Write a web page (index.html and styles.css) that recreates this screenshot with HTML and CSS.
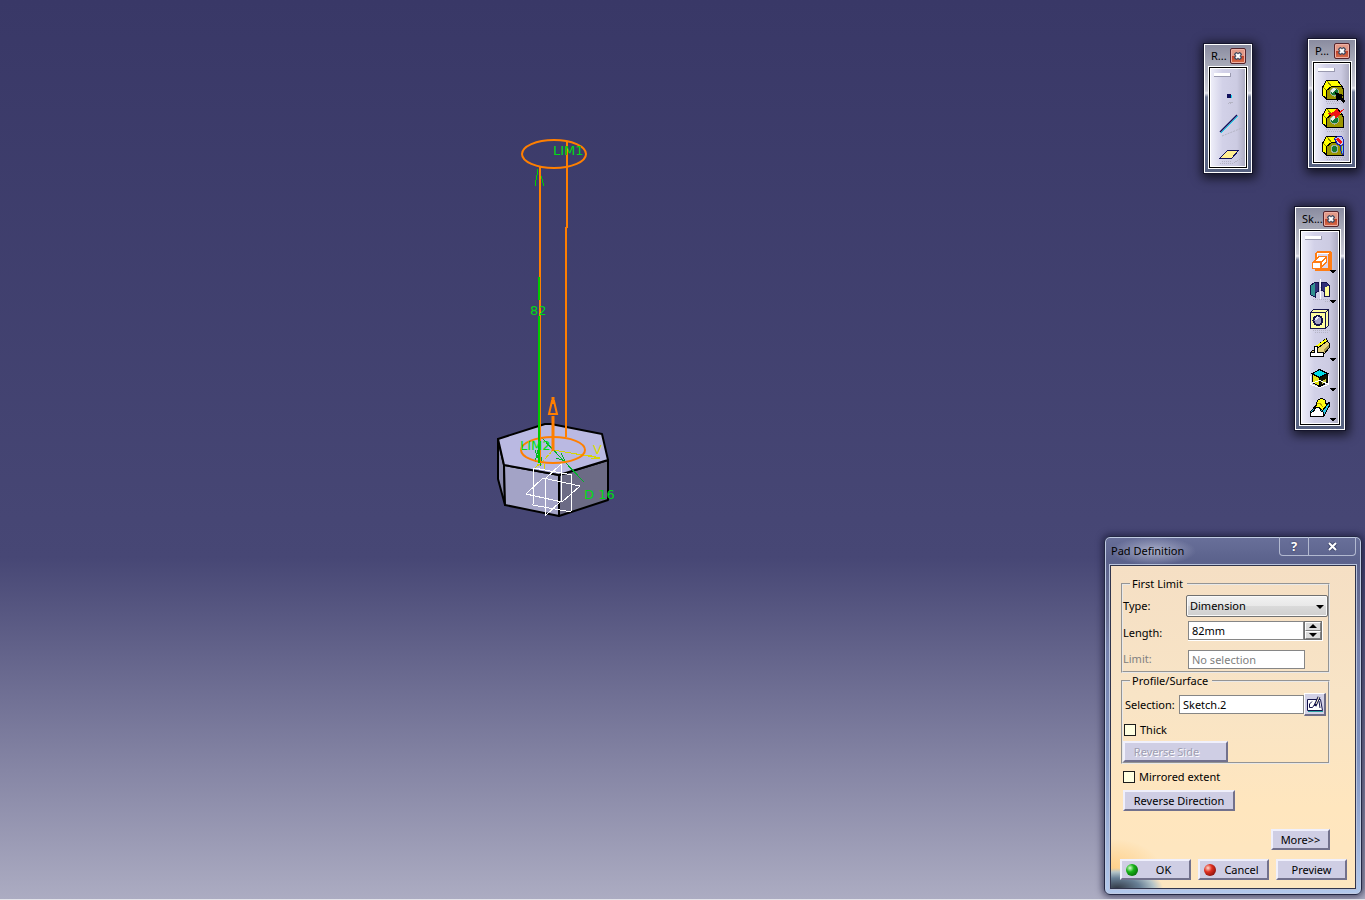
FILE: index.html
```html
<!DOCTYPE html>
<html lang="en">

<head>
    <meta charset="UTF-8">
    <meta name="viewport" content="width=device-width, initial-scale=1.0">
    <title>Part Design</title>
    <link rel="stylesheet" href="styles.css">
</head>

<body>
    <main class="workspace">
        <!-- 3D Model -->
        <svg class="model" width="140" height="400" viewBox="490 130 140 400" role="img" aria-label="Bolt model">
            <g stroke="#000" stroke-width="2" stroke-linejoin="round">
                <path fill="#8c8cae" d="M498 439L504 465L505 505L498 479Z" />
                <path fill="#a3a3c6" d="M504 465L559 475L559 516L505 505Z" />
                <path fill="#6c6b85" d="M559 475L608 460L608 500L559 516Z" />
                <path fill="#bab9e2" d="M498 439L545 424H551L602 434L608 460L559 475L504 465Z" />
            </g>
            <g fill="none" stroke="#d6d600" shape-rendering="crispEdges">
                <path d="M553 450L600 458M588 455L600 458L591 459" />
                <path stroke-dasharray="5 2" d="M553 450L544 460L534 469M537 464H544V469" />
            </g>
            <g fill="none" stroke="#fff" shape-rendering="crispEdges">
                <path d="M534 468L572 475L571 512L533 505Z" />
                <path d="M543 478L580 486L562 502L526 494Z" />
                <path d="M561 464V501L545 516V479Z" />
            </g>
            <g fill="none" stroke="#00b428" shape-rendering="crispEdges">
                <path d="M541 437L584 482M561 453L565 461L556 458" />
                <path d="M539 446L535 462M539 446L542 462M535 450L541 466" />
                <path stroke="#00d200" d="M538 169L535 186M539 169L544 186" />
            </g>
            <g fill="none" stroke="#ff7f00" stroke-width="2">
                <ellipse cx="554" cy="154" rx="32" ry="14" />
                <ellipse cx="553" cy="450" rx="32" ry="13" />
                <path d="M540 167V463M567 141V228M566 227V437" />
                <path stroke-width="3" d="M553 416V451" />
                <path d="M552 401L549 414H557L554 401Z" />
                <path stroke-width="3" d="M553 397V404" />
            </g>
            <path fill="none" stroke="#00c800" stroke-width="2" d="M539 277V300M539 316V463" />
            <path fill="none" stroke="#ff7f00" d="M540 277V463" shape-rendering="crispEdges" />
            <g class="model-label">
                <text x="553" y="155">LIM1</text>
                <text x="530" y="315">82</text>
                <text x="520" y="450">LIM2</text>
                <text x="584" y="499">D 16</text>
                <text class="axis-label" x="593" y="454">V</text>
            </g>
        </svg>

        <!-- Reference Elements Toolbar -->
        <section class="toolbar toolbar-reference">
            <div class="toolbar-title">
                <h2>R...</h2>
                <button class="close-btn" aria-label="Close"><svg width="8" height="8" viewBox="0 0 8 8"><path d="M1 1L7 7M7 1L1 7" stroke="#444c60" stroke-width="4" /><path d="M2 2L6 6M6 2L2 6" stroke="#fff" stroke-width="2" /></svg></button>
            </div>
            <div class="toolbar-body">
                <button class="tool" aria-label="Point">
                    <svg width="36" height="28" viewBox="0 0 36 28" shape-rendering="crispEdges">
                        <path fill="#0cd8f0" d="M18 13H22V16H18Z" />
                        <path fill="#10105c" d="M17 12H21V16H17Z" />
                        <path stroke="#b4b4c4" stroke-dasharray="1 1" d="M18 22L21 20M20 22L23 20" />
                    </svg>
                </button>
                <button class="tool" aria-label="Line">
                    <svg width="36" height="28" viewBox="0 0 36 28">
                        <path stroke="#b4b4c4" stroke-dasharray="2 1" d="M12 26L32 18" />
                        <path stroke="#0cd8f0" d="M11 23L28 6" />
                        <path stroke="#10105c" stroke-width="1.5" d="M10 22L27 5" />
                    </svg>
                </button>
                <button class="tool" aria-label="Plane">
                    <svg width="36" height="28" viewBox="0 0 36 28" shape-rendering="crispEdges">
                        <path stroke="#b4b4c4" stroke-dasharray="1 1" d="M10 25H24L32 20M12 23H22" fill="none" />
                        <path fill="#ffee90" stroke="#10105c" d="M9.500 20.500L17.500 12.500H28.500L21.500 20.500Z" />
                    </svg>
                </button>
            </div>
        </section>

        <!-- Product Knowledge Toolbar -->
        <section class="toolbar toolbar-product">
            <div class="toolbar-title">
                <h2>P...</h2>
                <button class="close-btn" aria-label="Close"><svg width="8" height="8" viewBox="0 0 8 8"><path d="M1 1L7 7M7 1L1 7" stroke="#444c60" stroke-width="4" /><path d="M2 2L6 6M6 2L2 6" stroke="#fff" stroke-width="2" /></svg></button>
            </div>
            <div class="toolbar-body">
                <button class="tool" aria-label="Select part">
                    <svg width="36" height="28" viewBox="0 0 36 28" shape-rendering="crispEdges">
                        <path stroke="#b4b4c4" stroke-dasharray="1 1" d="M12 24.500H32M13 26.500H31" />
                        <path fill="#ff0" stroke="#000" d="M8.500 10.500L12.500 3.500H23.500L29.500 11.500V22.500H13.500L8.500 18.500Z" />
                        <path fill="#9c9600" stroke="#000" d="M12.500 22.500V13.500L17.500 9.500H27.500L29.500 12.500V22.500Z" />
                        <path stroke="#807c00" d="M9 10L12.500 13.500M13 4L17.500 9.500" />
                        <circle cx="20.500" cy="15" r="4" fill="#147832" stroke="#a0b4a0" />
                        <path fill="#e8f0e8" d="M17 13L20 11L22 12L18 17Z" />
                        <path d="M21 15L29 18L27 20L31 24L29 26L25 22L23 24Z" />
                    </svg>
                </button>
                <button class="tool" aria-label="Update part">
                    <svg width="36" height="28" viewBox="0 0 36 28" shape-rendering="crispEdges">
                        <path stroke="#b4b4c4" stroke-dasharray="1 1" d="M12 24.500H32M13 26.500H31" />
                        <path fill="#ff0" stroke="#000" d="M8.500 10.500L12.500 3.500H23.500L29.500 11.500V22.500H13.500L8.500 18.500Z" />
                        <path fill="#9c9600" stroke="#000" d="M12.500 22.500V13.500L17.500 9.500H27.500L29.500 12.500V22.500Z" />
                        <path stroke="#807c00" d="M9 10L12.500 13.500M13 4L17.500 9.500" />
                        <circle cx="20.500" cy="15" r="4" fill="#147832" stroke="#a0b4a0" />
                        <path fill="#e8f0e8" d="M17 13L20 11L22 12L18 17Z" />
                        <path fill="#f01414" d="M12 9L20 7L23 3L25 7L30 4L22 14L20 10L14 13L17 10Z" />
                    </svg>
                </button>
                <button class="tool" aria-label="Inspect part">
                    <svg width="36" height="28" viewBox="0 0 36 28" shape-rendering="crispEdges">
                        <path stroke="#b4b4c4" stroke-dasharray="1 1" d="M12 24.500H32M13 26.500H31" />
                        <path fill="#ff0" stroke="#000" d="M8.500 10.500L12.500 3.500H23.500L29.500 11.500V22.500H13.500L8.500 18.500Z" />
                        <path fill="#9c9600" stroke="#000" d="M12.500 22.500V13.500L17.500 9.500H27.500L29.500 12.500V22.500Z" />
                        <path stroke="#807c00" d="M9 10L12.500 13.500M13 4L17.500 9.500" />
                        <circle cx="20.500" cy="16" r="3.500" fill="#147832" stroke="#a0b4a0" />
                        <path fill="#c8c8e8" stroke="#1420b4" d="M20.500 5.500L23.500 3.500H27.500L29.500 6.500V10.500L27.500 12.500L23.500 11.500Z" />
                        <path fill="#f01414" d="M21 6L25 5L28 9L26 11Z" />
                        <path stroke="#1420b4" d="M26.500 12V17L28.500 22M29.500 11V22" fill="none" />
                        <path stroke="#64c8f0" d="M28 13V20" />
                    </svg>
                </button>
            </div>
        </section>

        <!-- Sketch-Based Features Toolbar -->
        <section class="toolbar toolbar-sketch">
            <div class="toolbar-title">
                <h2>Sk...</h2>
                <button class="close-btn" aria-label="Close"><svg width="8" height="8" viewBox="0 0 8 8"><path d="M1 1L7 7M7 1L1 7" stroke="#444c60" stroke-width="4" /><path d="M2 2L6 6M6 2L2 6" stroke="#fff" stroke-width="2" /></svg></button>
            </div>
            <div class="toolbar-body">
                <button class="tool" aria-label="Pad">
                    <svg width="38" height="29" viewBox="0 0 38 29" shape-rendering="crispEdges">
                        <path fill="#ff7d14" d="M16 4H29L31 6V22L29 24H14V6Z" />
                        <path fill="#fff" d="M16 6H28V7H17V22H16Z" />
                        <path fill="#d8d5ee" d="M17 7H27V21H17Z" />
                        <path fill="#ff7d14" d="M11 15L17 9H26V15L20 22H11Z" />
                        <path fill="#fff" d="M12 16H19V21H12ZM14 14L18 10H24L20 14Z" />
                        <path fill="#fff" d="M21 15L25 11V14L21 19Z" />
                        <path d="M28 23H35L32 26H31Z" />
                    </svg>
                </button>
                <button class="tool" aria-label="Shaft">
                    <svg width="38" height="29" viewBox="0 0 38 29" shape-rendering="crispEdges">
                        <path stroke="#b4b4c4" stroke-dasharray="1 1" d="M12 23.500H30M24 25.500H30" />
                        <path fill="#309090" stroke="#14144c" d="M9.500 9.500L13.500 6.500H17.500V15.500L14.500 16.500V21.500L9.500 18.500Z" />
                        <path fill="#303078" d="M14 7H17V15L14 16Z" />
                        <path fill="#303078" stroke="#14144c" d="M20.500 6.500H25.500L28.500 9.500V20.500H23.500V15.500L20.500 14.500Z" />
                        <path fill="#ffff96" d="M24 11L28 10V20H24Z" />
                        <path stroke="#fff" stroke-dasharray="8 1 2 1" d="M19 3V24" />
                        <path d="M28 24H35L32 27H31Z" />
                    </svg>
                </button>
                <button class="tool" aria-label="Pocket">
                    <svg width="38" height="29" viewBox="0 0 38 29" shape-rendering="crispEdges">
                        <path stroke="#b4b4c4" stroke-dasharray="1 1" d="M12 25.500H30M14 27.500H28" />
                        <path fill="#ffffa0" stroke="#14144c" d="M9.500 7.500L12.500 4.500H27.500V20.500L24.500 23.500H9.500Z" />
                        <path fill="none" stroke="#14144c" d="M9.500 7.500H24.500V23M24.500 7.500L27.500 4.500" />
                        <circle cx="17" cy="15.500" r="4.500" fill="#a0a0c8" stroke="#14144c" stroke-width="2" />
                        <path stroke="#e8e8fa" d="M14 15L17 12" stroke-width="2" />
                    </svg>
                </button>
                <button class="tool" aria-label="Rib">
                    <svg width="38" height="29" viewBox="0 0 38 29" shape-rendering="crispEdges">
                        <path fill="#e6d278" stroke="#000" d="M9.500 18.500L11.500 16.500H13.500V13.500L25.500 4.500L26.500 7.500L28.500 9.500V13.500L22.500 20.500L16.500 18.500Z" />
                        <path stroke="#ff0" stroke-width="2" d="M15 13L25 6" />
                        <path stroke="#000" d="M17 14L26 7" />
                        <path fill="#a09050" d="M23 16L28 10V13L23 18Z" />
                        <path fill="#fff" stroke="#000" d="M9.500 18.500H13.500V12.500H16.500V18.500H22.500V22.500H9.500Z" />
                        <path d="M28 24H35L32 27H31Z" />
                    </svg>
                </button>
                <button class="tool" aria-label="Solid combine">
                    <svg width="38" height="29" viewBox="0 0 38 29" shape-rendering="crispEdges">
                        <path fill="#00dce6" stroke="#000" d="M18.500 6.500L26.500 10.500L18.500 14.500L11.500 10.500Z" />
                        <path fill="#e6e614" stroke="#000" d="M11.500 11L18.500 14.500V23.500L11.500 19.500Z" />
                        <path fill="#141400" stroke="#000" d="M18.500 14.500L26.500 11V19.500L18.500 23.500Z" />
                        <path fill="#c8c83c" d="M21 18L25 16V19L21 21Z" />
                        <path fill="none" stroke="#fff" d="M9.500 13V21.500L18.500 24.500L27.500 21.500V13M10 20.500L18.500 17.500L27 21" />
                        <path d="M28 25H35L32 28H31Z" />
                    </svg>
                </button>
                <button class="tool" aria-label="Multi-sections solid">
                    <svg width="38" height="29" viewBox="0 0 38 29" shape-rendering="crispEdges">
                        <path fill="#28c8e6" stroke="#000" d="M9.500 19.500L18.500 9.500L24.500 12.500L28.500 10.500V13.500L22.500 24.500H9.500Z" />
                        <path fill="#ff1" stroke="#000" d="M14.500 15.500L16.500 8.500L19.500 6.500H21.500L24.500 8.500V11.500L26.500 12.500L21.500 18.500L17.500 15.500Z" />
                        <path stroke="#b49c00" fill="none" d="M16 11.500H19L22 15" />
                        <path fill="#fff" stroke="#000" d="M9.500 24.500V20.500L12.500 19.500L14.500 15.500H18.500L19.500 18.500L22.500 20.500V24.500Z" />
                        <path d="M28 26H35L32 29H31Z" />
                    </svg>
                </button>
            </div>
        </section>

        <!-- Pad Definition Dialog -->
        <section class="dialog">
            <header class="dialog-header">
                <h1>Pad Definition</h1>
                <div class="window-controls">
                    <button class="help-btn" aria-label="Help">?</button>
                    <button aria-label="Close"><svg width="11" height="9" viewBox="0 0 11 9"><path stroke="#444c70" stroke-width="4" d="M2 1L9 8M9 1L2 8" /><path stroke="#fff" stroke-width="2" d="M2 1L9 8M9 1L2 8" /></svg></button>
                </div>
            </header>
            <form class="dialog-body">
                <fieldset class="first-limit">
                    <legend>First Limit</legend>
                    <label for="type">Type:</label>
                    <div class="select-wrap">
                        <select id="type">
                            <option>Dimension</option>
                        </select>
                    </div>
                    <label for="length">Length:</label>
                    <div class="spin-box">
                        <input type="text" id="length" value="82mm">
                        <div class="spin-buttons">
                            <button type="button" class="spin-up" aria-label="Increase"></button>
                            <button type="button" class="spin-down" aria-label="Decrease"></button>
                        </div>
                    </div>
                    <label for="limit" class="muted">Limit:</label>
                    <input type="text" id="limit" class="limit-input" value="No selection" disabled>
                </fieldset>

                <fieldset class="profile">
                    <legend>Profile/Surface</legend>
                    <div class="selection-row">
                        <label for="selection">Selection:</label>
                        <input type="text" id="selection" value="Sketch.2">
                        <button type="button" class="sketch-btn" aria-label="Edit sketch">
                            <svg width="18" height="18" viewBox="0 0 18 18">
                                <path fill="#fff" stroke="#14144c" d="M1.500 4.500H14.500L16.500 15.500H1.500Z" />
                                <path stroke="#28a0a0" d="M2 16.500H17" />
                                <path fill="none" stroke="#14144c" d="M6 6.500L3.500 9V12.500H6.500L11 6M13 6L14 13" />
                                <path stroke="#14144c" stroke-width="3" d="M9 11L13 2" />
                                <path stroke="#fffbd0" d="M10 9L13 2" />
                            </svg>
                        </button>
                    </div>
                    <label class="check"><input type="checkbox">Thick</label>
                    <button type="button" class="btn reverse-side" disabled>Reverse Side</button>
                </fieldset>

                <label class="check mirrored"><input type="checkbox">Mirrored extent</label>
                <button type="button" class="btn reverse-direction">Reverse Direction</button>
                <button type="button" class="btn more">More&gt;&gt;</button>

                <div class="actions">
                    <button type="button" class="btn"><span class="dot green"></span><span class="btn-text">OK</span></button>
                    <button type="button" class="btn"><span class="dot red"></span><span class="btn-text">Cancel</span></button>
                    <button type="button" class="btn">Preview</button>
                </div>
            </form>
        </section>
    </main>
</body>

</html>
```
FILE: styles.css
```css
/* General Reset */
* {
    margin: 0;
    padding: 0;
    box-sizing: border-box;
}

body,
button,
input,
select {
    font-family: 'Noto Sans', 'Open Sans', sans-serif;
    font-size: 11px;
    line-height: 16px;
    color: #000;
}

svg {
    display: block;
}

/* Workspace */
.workspace {
    position: relative;
    height: 100vh;
    overflow: hidden;
    background: linear-gradient(#393867 0%, #474775 62%, #acacc2 100%);
    border-bottom: 1px solid #e4e4ea;
}

.model {
    position: absolute;
    left: 490px;
    top: 130px;
}

.model-label {
    font-family: 'DejaVu Sans', sans-serif;
    font-size: 13px;
    fill: #00dc14;
}

.model-label .axis-label {
    fill: #dcdc00;
}

/* Toolbars */
.toolbar {
    position: absolute;
    width: 48px;
    padding: 3px 4px 4px;
    border: 1px solid #fff;
    box-shadow: 0 0 0 1px #14142c, 1px 2px 10px 3px rgba(0, 0, 0, 0.7);
    background: linear-gradient(#8a8ca0 0, #adafbc 24px, #c8c9d4 46px, #e8e8ee 48px, #717b98 52px, #566180 100%);
}

.toolbar-reference {
    top: 44px;
    right: 113px;
}

.toolbar-product {
    top: 39px;
    right: 9px;
}

.toolbar-sketch {
    top: 207px;
    right: 20px;
    width: 50px;
}

.toolbar-title {
    display: flex;
    justify-content: space-between;
    height: 19px;
    padding: 0 1px 0 2px;
}

.toolbar-title h2 {
    font-size: 11px;
    font-weight: normal;
    line-height: 16px;
}

.close-btn {
    display: flex;
    align-items: center;
    justify-content: center;
    width: 16px;
    height: 16px;
    border: 1px solid #54242c;
    border-radius: 2px;
    box-shadow: inset 0 0 0 1px #eeb0a4;
    background: linear-gradient(#e29a88 50%, #bd4028 50%, #d8704c);
}

.toolbar-body {
    padding: 14px 0 1px;
    border: 1px solid #000;
    box-shadow: 0 0 0 1px #fff, inset 0 0 0 1px #fff;
    background: linear-gradient(90deg, #f0f0fa, #d2d1e8 35%, #cccbe2 75%, #a9a8be);
    position: relative;
}

.toolbar-sketch .toolbar-body {
    padding: 16px 0 3px;
}

/* Drag grip */
.toolbar-body::before {
    content: "";
    position: absolute;
    top: 5px;
    left: 4px;
    width: 16px;
    height: 3px;
    background: #fff;
    border-right: 1px solid #9a9ab0;
    border-bottom: 1px solid #9a9ab0;
}

.tool {
    display: block;
    width: 100%;
    border: none;
    background: none;
}

/* Dialog */
.dialog {
    position: absolute;
    right: 3px;
    bottom: 4px;
    width: 258px;
    padding: 0 5px 5px;
    border: 1px solid #242844;
    border-radius: 6px;
    box-shadow: inset 0 0 0 1px #c0cbe2, 0 0 6px 2px rgba(20, 20, 50, 0.6);
    background: linear-gradient(#69709a 0, #5b628c 24px, #6b7297 80px, #7480ac 110px, #8093c0 220px, #b3c9ec 100%);
}

.dialog-header {
    display: flex;
    justify-content: space-between;
    height: 28px;
    padding-left: 1px;
}

.dialog-header h1 {
    padding: 5px 12px 0 0;
    font-size: 11px;
    font-weight: normal;
    line-height: 17px;
    background: radial-gradient(closest-side, rgba(200, 204, 224, 0.7), transparent);
}

.window-controls {
    display: flex;
    height: 19px;
    border: 1px solid #b2b9d0;
    border-top: none;
    border-radius: 0 0 4px 4px;
}

.window-controls button {
    display: flex;
    align-items: center;
    justify-content: center;
    width: 46px;
    border: none;
    background: none;
}

.window-controls .help-btn {
    width: 29px;
    border-right: 1px solid #b2b9d0;
    color: #fff;
    font-size: 13px;
    font-weight: bold;
    text-shadow: 0 0 2px #20243c;
}

.dialog-body {
    display: flex;
    flex-direction: column;
    align-items: flex-start;
    padding: 10px 8px 8px 9px;
    border: 1px solid #30344c;
    box-shadow: 0 0 0 1px #b9c3dc;
    background:
        radial-gradient(ellipse 46px 20px at 6px 100%, #343c48 0, #688096 50%, #b4c4c8 80%, transparent 100%),
        radial-gradient(ellipse 50px 30px at 0 94%, #ffcf88, transparent),
        linear-gradient(#f5dfc4, #f8e4c6 40%, #ffe6be 75%, #fde6c0);
}

fieldset {
    width: 209px;
    margin-left: 1px;
    border: 2px groove #e8e8e8;
}

legend {
    height: 16px;
    margin-left: 7px;
    padding: 0 4px 0 2px;
}

.first-limit {
    display: grid;
    grid-template-columns: 63px 1fr;
    align-items: center;
    padding: 3px 0 2px;
}

.first-limit label {
    margin-bottom: 4px;
}

.first-limit .muted {
    margin-bottom: 0;
    line-height: 20px;
    color: #808080;
}

input[type="text"] {
    min-width: 0;
    height: 19px;
    padding: 0 3px;
    border: 1px solid #868686;
    background: #fff;
}

input[type="text"]:disabled {
    color: #808080;
}

.select-wrap {
    position: relative;
    margin-bottom: 4px;
}

.select-wrap select {
    display: block;
    width: 100%;
    height: 22px;
    padding-left: 3px;
    appearance: none;
    border: 1px solid #707070;
    border-radius: 2px;
    box-shadow: inset 0 0 0 1px #fafafa;
    background: linear-gradient(#f2f2f2, #e8e8e8 50%, #dadada 50%, #cfcfcf);
}

.select-wrap::after {
    content: "";
    position: absolute;
    top: 10px;
    right: 4px;
    border: 4px solid transparent;
    border-top-color: #000;
    border-bottom: none;
    pointer-events: none;
}

.spin-box {
    display: flex;
    width: 135px;
    height: 20px;
    margin: 0 0 8px 2px;
    border-right: 1px solid #fff;
    border-bottom: 1px solid #fff;
}

.spin-box input {
    flex: 1;
}

.spin-buttons {
    display: flex;
    flex-direction: column;
    width: 18px;
    border: 1px solid #707070;
}

.spin-buttons button {
    display: flex;
    flex: 1;
    align-items: center;
    justify-content: center;
    border: 1px solid #fff;
    border-right-color: #808080;
    border-bottom-color: #808080;
    background: #dcdcdc;
}

.spin-buttons button::after {
    content: "";
    border: 4px solid transparent;
}

.spin-buttons .spin-up::after {
    border-top: none;
    border-bottom-color: #000;
}

.spin-buttons .spin-down::after {
    border-bottom: none;
    border-top-color: #000;
}

.limit-input {
    width: 117px;
    margin-left: 2px;
}

/* Profile Group */
.profile {
    padding-top: 4px;
}

.selection-row {
    display: flex;
    align-items: center;
    width: 203px;
    padding-left: 2px;
    margin-bottom: 7px;
}

.selection-row label {
    width: 54px;
    white-space: nowrap;
}

.selection-row input {
    flex: 1;
}

.sketch-btn {
    display: flex;
    align-items: center;
    justify-content: center;
    width: 22px;
    height: 23px;
    border: 1px solid #fff;
    border-right: 2px solid #6e6d86;
    border-bottom: 2px solid #6e6d86;
    background: #d2d1e6;
}

.check {
    display: flex;
    align-items: center;
    height: 13px;
    padding-left: 1px;
    margin-bottom: 5px;
}

.check input {
    width: 12px;
    height: 12px;
    margin-right: 4px;
    appearance: none;
    border: 1px solid #1c1c1c;
    background: #ffffe1;
}

.mirrored {
    padding-left: 3px;
    margin: 6px 0 7px;
}

/* Buttons */
.btn {
    display: flex;
    align-items: center;
    justify-content: center;
    height: 21px;
    border: 2px solid #f0f0fc;
    border-right-color: #72718c;
    border-bottom-color: #72718c;
    background: #cfcee4;
    white-space: nowrap;
}

.reverse-side {
    width: 105px;
    padding-right: 18px;
    color: #a09fb2;
    text-shadow: 1px 1px #fff;
}

.reverse-direction {
    width: 112px;
    margin: 0 0 18px 3px;
}

.more {
    width: 59px;
    margin-left: 151px;
}

.actions {
    display: flex;
    gap: 7px;
    width: 100%;
    margin-top: 9px;
}

.actions .btn {
    flex: 1;
}

.dot {
    width: 12px;
    height: 12px;
    margin-left: 4px;
    border-radius: 50%;
}

.btn-text {
    flex: 1;
    text-align: center;
}

.green {
    background: radial-gradient(circle at 4px 4px, #d8ffd0, #18b418 35%, #024c02);
}

.red {
    background: radial-gradient(circle at 4px 4px, #ffdcd0, #e03020 35%, #5c0404);
}
```
